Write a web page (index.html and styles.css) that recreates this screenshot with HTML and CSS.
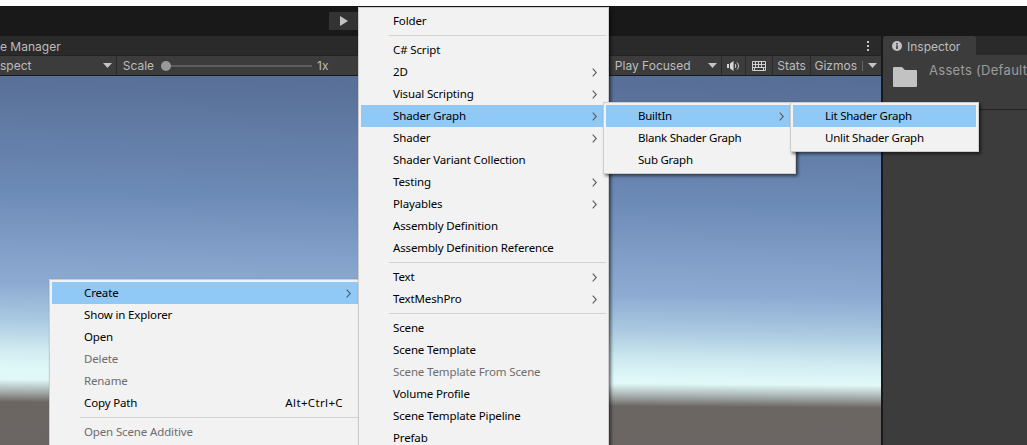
FILE: index.html
```html
<!DOCTYPE html>
<html lang="en">
<head>
<meta charset="utf-8">
<title>Unity Create menu</title>
<link rel="stylesheet" href="styles.css">
</head>
<body>
<svg class="defs" width="0" height="0" aria-hidden="true">
  <symbol id="chev" viewBox="0 0 5 9"><path d="M.7.7 4.300 4.500.7 8.300" fill="none" stroke="#5a5a5a" stroke-width="1.100"/></symbol>
  <symbol id="drop" viewBox="0 0 9 5"><path d="M0 0h9L4.500 5z" fill="#c4c4c4"/></symbol>
</svg>

<header class="topbar">
  <div class="play"><svg class="play-icon" viewBox="0 0 8 10"><path d="M0 0 8 5 0 10z" fill="#c2c2c2"/></svg></div>
</header>

<main class="editor">
  <section class="scene">
    <div class="tabs">
      <span>e Manager</span>
      <svg class="kebab" viewBox="0 0 2 10"><path d="M0 0h2v2H0zM0 4h2v2H0zM0 8h2v2H0z" fill="#c4c4c4"/></svg>
    </div>
    <div class="toolbar">
      <div class="tool tool-aspect"><span>spect</span><svg class="drop"><use href="#drop"/></svg></div>
      <div class="tool tool-scale">
        <span>Scale</span>
        <div class="slider"><i class="knob"></i><i class="track"></i></div>
        <span>1x</span>
      </div>
      <div class="tool tool-focus"><span>Play Focused</span><svg class="drop"><use href="#drop"/></svg></div>
      <div class="tool tool-audio"><svg class="icon-audio" viewBox="0 0 13 10"><path d="M0 3h2v4H0zM3 2.500 6.500 0v10L3 7.500z" fill="#d8d8d8"/><path d="M8 3c1 1 1 3 0 4M10 1.500c2 2 2 5 0 7" fill="none" stroke="#d8d8d8"/></svg></div>
      <div class="tool tool-keys"><svg class="icon-keys" viewBox="0 0 14 10"><path d="M.5.500h13v9H.5zM.5 3.500h13M.5 6.500h13M3.500.5v6M6.500.5v6M9.500.5v6M11.500 6.500v3M2.500 6.500v3" fill="none" stroke="#d0d0d0"/></svg></div>
      <div class="tool tool-stats"><span>Stats</span></div>
      <div class="tool tool-gizmos"><span>Gizmos</span><i class="bar"></i><svg class="drop"><use href="#drop"/></svg></div>
    </div>
    <div class="view"></div>
  </section>

  <aside class="inspector">
    <div class="insp-tabs">
      <div class="insp-tab">
        <svg class="info" viewBox="0 0 10 10"><circle cx="5" cy="5" r="5" fill="#c4c4c4"/><path d="M4.200 2h1.600v1.500H4.200zM4.200 4.300h1.600V8H4.200z" fill="#3c3c3c"/></svg>
        <span>Inspector</span>
      </div>
    </div>
    <div class="insp-head">
      <svg class="folder" viewBox="0 0 24 20"><path d="M1 0h8l3 3h11a1 1 0 0 1 1 1v15a1 1 0 0 1-1 1H1a1 1 0 0 1-1-1V1a1 1 0 0 1 1-1z" fill="#c2c2c2"/></svg>
      <span class="insp-title">Assets (Default</span>
    </div>
    <div class="insp-body"></div>
  </aside>
</main>

<nav class="menu menu-context">
  <div class="row on"><span>Create</span><svg class="chev"><use href="#chev"/></svg></div>
  <div class="row"><span>Show in Explorer</span></div>
  <div class="row"><span>Open</span></div>
  <div class="row off"><span>Delete</span></div>
  <div class="row off"><span>Rename</span></div>
  <div class="row"><span>Copy Path</span><span class="shortcut">Alt+Ctrl+C</span></div>
  <div class="sep"></div>
  <div class="row off"><span>Open Scene Additive</span></div>
</nav>

<nav class="menu menu-create">
  <div class="row"><span>Folder</span></div>
  <div class="sep"></div>
  <div class="row"><span>C# Script</span></div>
  <div class="row"><span>2D</span><svg class="chev"><use href="#chev"/></svg></div>
  <div class="row"><span>Visual Scripting</span><svg class="chev"><use href="#chev"/></svg></div>
  <div class="row on"><span>Shader Graph</span><svg class="chev"><use href="#chev"/></svg></div>
  <div class="row"><span>Shader</span><svg class="chev"><use href="#chev"/></svg></div>
  <div class="row"><span>Shader Variant Collection</span></div>
  <div class="row"><span>Testing</span><svg class="chev"><use href="#chev"/></svg></div>
  <div class="row"><span>Playables</span><svg class="chev"><use href="#chev"/></svg></div>
  <div class="row"><span>Assembly Definition</span></div>
  <div class="row"><span>Assembly Definition Reference</span></div>
  <div class="sep"></div>
  <div class="row"><span>Text</span><svg class="chev"><use href="#chev"/></svg></div>
  <div class="row"><span>TextMeshPro</span><svg class="chev"><use href="#chev"/></svg></div>
  <div class="sep"></div>
  <div class="row"><span>Scene</span></div>
  <div class="row"><span>Scene Template</span></div>
  <div class="row off"><span>Scene Template From Scene</span></div>
  <div class="row"><span>Volume Profile</span></div>
  <div class="row"><span>Scene Template Pipeline</span></div>
  <div class="row"><span>Prefab</span></div>
</nav>

<nav class="menu menu-shader">
  <div class="row on"><span>BuiltIn</span><svg class="chev"><use href="#chev"/></svg></div>
  <div class="row"><span>Blank Shader Graph</span></div>
  <div class="row"><span>Sub Graph</span></div>
</nav>

<nav class="menu menu-builtin">
  <div class="row on"><span>Lit Shader Graph</span></div>
  <div class="row"><span>Unlit Shader Graph</span></div>
</nav>
</body>
</html>
```

FILE: styles.css
```css
* { box-sizing: border-box; }

html, body {
  margin: 0;
  height: 445px;
  overflow: hidden;
}

body {
  position: relative;
  display: flex;
  flex-direction: column;
  padding-top: 6px;
  background: #fff;
  font-family: Inter, "Liberation Sans", sans-serif;
  font-size: 12px;
  color: #bdbdbd;
}

.defs { position: absolute; }

.topbar {
  flex: none;
  display: flex;
  height: 30px;
  padding: 6px 0 0 329px;
  background: #191919;
}

.play {
  display: flex;
  align-items: center;
  justify-content: center;
  width: 32px;
  height: 18px;
  background: #333;
}

.play-icon { width: 8px; height: 10px; margin-right: 3px; }

.editor {
  flex: 1;
  display: flex;
  min-height: 0;
  background: #191919;
}

.scene {
  flex: none;
  width: 881px;
  display: flex;
  flex-direction: column;
}

.tabs {
  flex: none;
  display: flex;
  align-items: center;
  justify-content: space-between;
  height: 19px;
  padding: 2px 12px 0 0;
  background: #2a2a2a;
  white-space: nowrap;
}

.kebab { width: 2px; height: 10px; margin-top: -2px; }

.toolbar {
  flex: none;
  display: flex;
  height: 21px;
  background: #3c3c3c;
  border-top: 1px solid #232323;
  border-bottom: 1px solid #191919;
}

.tool {
  display: flex;
  align-items: center;
  height: 100%;
  border-right: 1px solid #2a2a2a;
  white-space: nowrap;
}

.drop { width: 9px; height: 5px; }

.tool-aspect { width: 117px; justify-content: space-between; padding-right: 4px; }
.tool-scale { width: 493px; padding-left: 6px; border-right: 0; }
.tool-scale .slider { flex: none; display: flex; align-items: center; width: 151px; margin: 0 5px 0 7px; }
.knob { flex: none; width: 10px; height: 10px; border-radius: 50%; background: #999; }
.track { flex: none; width: 141px; height: 2px; background: #5e5e5e; }
.tool-focus { width: 113px; padding: 0 4px 0 5px; justify-content: space-between; border-left: 1px solid #2a2a2a; }
.tool-audio { width: 24px; justify-content: center; }
.icon-audio { width: 13px; height: 10px; }
.tool-keys { width: 27px; justify-content: center; }
.icon-keys { width: 14px; height: 10px; }
.tool-stats { width: 39px; justify-content: center; }
.tool-gizmos { flex: 1; padding: 0 4px 0 3px; border-right: 0; }
.tool-gizmos .bar { width: 1px; height: 10px; margin: 0 5px; background: #666; }

.view {
  flex: 1;
  background:
    linear-gradient(180.4deg,
      rgba(108, 102, 99, 0) 82.5%,
      rgba(108, 102, 99, .55) 86%,
      #6c6663 88.5%,
      #6a6562 100%),
    linear-gradient(181deg,
      #566d96 0,
      #5a7299 6.5%,
      #6c8ab6 33.6%,
      #8dabd2 58%,
      #a9c8e0 67%,
      #cfeaf0 75%,
      #e0f8f8 80%,
      #e0f8f8 100%);
}

.inspector {
  flex: none;
  width: 144px;
  margin-left: 2px;
  display: flex;
  flex-direction: column;
  background: #3c3c3c;
}

.insp-tabs {
  flex: none;
  height: 19px;
  background: #2a2a2a;
}

.insp-tab {
  display: flex;
  align-items: center;
  gap: 5px;
  width: 93px;
  height: 19px;
  padding: 1px 0 0 9px;
  background: #3c3c3c;
  border-radius: 3px 3px 0 0;
}

.info { width: 10px; height: 10px; margin-top: -1px; }

.insp-head {
  flex: none;
  display: flex;
  align-items: flex-start;
  height: 55px;
  padding: 12px 0 0 10px;
  border-bottom: 1px solid #232323;
  white-space: nowrap;
  overflow: hidden;
}

.folder { flex: none; width: 24px; height: 20px; }
.insp-title { margin: -5px 0 0 12px; font-size: 13px; color: #9c9c9c; letter-spacing: .3px; }

.insp-body { flex: 1; }

.menu {
  position: absolute;
  padding: 2px;
  background: #f2f2f2;
  border: 1px solid #cdcdcd;
  box-shadow: 2px 2px 3px rgba(0, 0, 0, .55);
  font-family: "Noto Sans", "Open Sans", sans-serif;
  font-size: 11.5px;
  letter-spacing: -.14px;
  color: #000;
  white-space: nowrap;
}

.menu span { margin-top: -2px; }

.menu-context { left: 49px; top: 279px; width: 314px; }
.menu-create { left: 358px; top: 7px; width: 251px; }
.menu-shader { left: 603px; top: 102px; width: 193px; letter-spacing: -.25px; }
.menu-builtin { left: 790px; top: 102px; width: 189px; letter-spacing: -.25px; }

.row {
  display: flex;
  align-items: center;
  justify-content: space-between;
  height: 22px;
  padding: 0 9px 0 32px;
}

.row.on { background: #90c8f6; }
.row.off { color: #6d6d6d; }

.menu .shortcut { margin-right: 8px; letter-spacing: .36px; }

.chev { width: 5px; height: 9px; }

.sep {
  height: 1px;
  margin: 3px 0 3px 28px;
  background: #d2d2d2;
}
```
